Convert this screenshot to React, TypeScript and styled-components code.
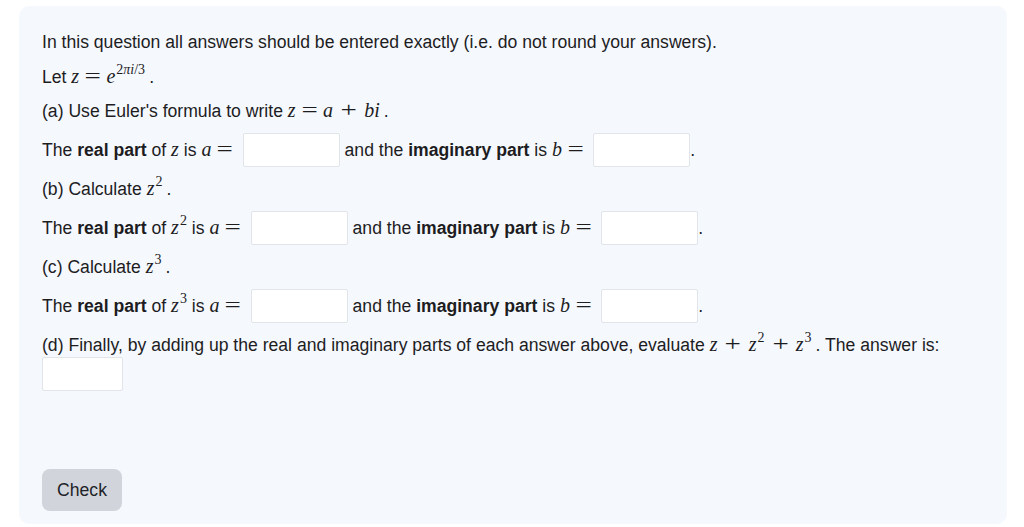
import styled, { createGlobalStyle } from "styled-components";

const GlobalStyle = createGlobalStyle`
  html, body {
    margin: 0;
    padding: 0;
    background: #ffffff;
  }
  body {
    font-family: "Liberation Sans", Arial, Helvetica, sans-serif;
    color: #1d1d1f;
  }
`;

const Page = styled.div`
  padding: 6px 17px 3px 19px;
`;

const Panel = styled.div`
  background: #f5f8fd;
  border-radius: 10px;
  padding: 24px 23px 13px 23px;
`;

const Para = styled.div<{ $last?: boolean }>`
  font-size: 17.6px;
  line-height: 24px;
  height: 24px;
  margin-bottom: ${(p) => (p.$last ? "0" : "10px")};
  white-space: nowrap;
`;

const Row = styled.div`
  font-size: 17.6px;
  line-height: 34px;
  height: 34px;
  margin-bottom: 10px;
  white-space: nowrap;
`;

const Answer = styled.input<{ $w?: number }>`
  display: inline-block;
  vertical-align: middle;
  box-sizing: border-box;
  width: ${(p) => p.$w ?? 97}px;
  height: 34px;
  margin: -3px 0 0 4px;
  border: 1px solid #e1e5ea;
  border-radius: 2px;
  background: #ffffff;
  font-size: 16px;
  outline: none;
`;

const Alone = styled(Answer)`
  display: block;
  margin: 1px 0 0 0;
`;

const Math = styled.span`
  font-family: "Liberation Serif", "Times New Roman", serif;
  font-size: 20px;
  white-space: nowrap;
`;

const V = styled.i`
  font-style: italic;
`;

const Op = styled.span<{ $bin?: boolean }>`
  display: inline-block;
  margin: 0 ${(p) => (p.$bin ? 10 : 8)}px;
  transform: scaleX(1.45);
`;

const Sup = styled.sup`
  font-size: 14px;
  vertical-align: 0;
  position: relative;
  top: -9px;
  margin-left: 1px;
`;

const Dot = styled.span`
  margin-left: 4px;
`;

const Footer = styled.div`
  margin-top: 78px;
`;

const CheckButton = styled.button`
  font-family: "Liberation Sans", Arial, sans-serif;
  font-size: 17.6px;
  color: #1f2328;
  background: #d1d5db;
  border: 0;
  border-radius: 8px;
  width: 80px;
  height: 42px;
  cursor: pointer;
`;

const Pow = ({ n }: { n: string }) => (
  <>
    <V>z</V>
    <Sup>{n}</Sup>
  </>
);

function PartRow({ of }: { of: React.ReactNode }) {
  return (
    <Row>
      The <b>real part</b> of <Math>{of}</Math> is{" "}
      <Math>
        <V>a</V>
        <Op>=</Op>
      </Math>
      <Answer aria-label="real part" /> and the <b>imaginary part</b> is{" "}
      <Math>
        <V>b</V>
        <Op>=</Op>
      </Math>
      <Answer aria-label="imaginary part" />.
    </Row>
  );
}

export default function App() {
  return (
    <Page>
      <GlobalStyle />
      <Panel>
        <Para>
          In this question all answers should be entered exactly (i.e. do not
          round your answers).
        </Para>
        <Para>
          Let{" "}
          <Math>
            <V>z</V>
            <Op>=</Op>
            <V>e</V>
            <Sup>
              2<V>πi</V>/3
            </Sup>
          </Math>
          <Dot>.</Dot>
        </Para>
        <Para>
          (a) Use Euler's formula to write{" "}
          <Math>
            <V>z</V>
            <Op>=</Op>
            <V>a</V>
            <Op $bin>+</Op>
            <V>bi</V>
          </Math>
          <Dot>.</Dot>
        </Para>
        <PartRow of={<V>z</V>} />
        <Para>
          (b) Calculate{" "}
          <Math>
            <Pow n="2" />
          </Math>
          <Dot>.</Dot>
        </Para>
        <PartRow of={<Pow n="2" />} />
        <Para>
          (c) Calculate{" "}
          <Math>
            <Pow n="3" />
          </Math>
          <Dot>.</Dot>
        </Para>
        <PartRow of={<Pow n="3" />} />
        <Para $last>
          (d) Finally, by adding up the real and imaginary parts of each answer
          above, evaluate{" "}
          <Math>
            <V>z</V>
            <Op $bin>+</Op>
            <Pow n="2" />
            <Op $bin>+</Op>
            <Pow n="3" />
          </Math>
          <Dot>.</Dot> The answer is:
        </Para>
        <Alone $w={81} aria-label="answer" />
        <Footer>
          <CheckButton>Check</CheckButton>
        </Footer>
      </Panel>
    </Page>
  );
}
